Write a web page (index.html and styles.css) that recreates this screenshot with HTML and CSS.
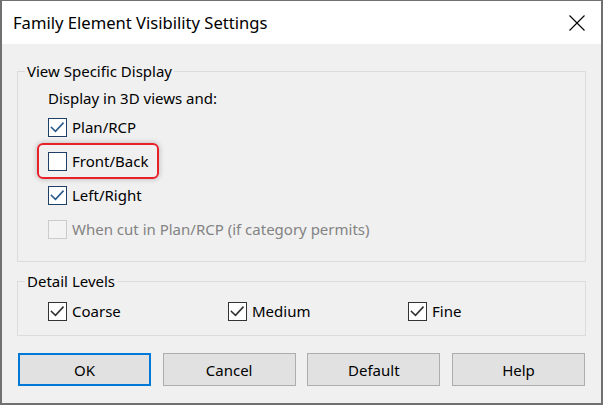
FILE: index.html
```html
<!DOCTYPE html>
<html>
<head>
<meta charset="utf-8">
<title>Family Element Visibility Settings</title>
<link rel="stylesheet" href="styles.css">
</head>
<body>
<div class="dialog">
  <div class="titlebar">
    <span class="title">Family Element Visibility Settings</span>
    <svg class="close" width="16" height="16" viewBox="0 0 16 16"><path d="M0.5 0.5 L15.5 15.5 M15.5 0.5 L0.5 15.5" stroke="#000" stroke-width="1.1" fill="none"/></svg>
  </div>
  <div class="content">
    <fieldset class="group group-view">
      <legend>View Specific Display</legend>
      <div class="caption">Display in 3D views and:</div>
      <div class="row"><label class="check"><span class="box box-blue"><svg viewBox="0 0 19 19"><path d="M3.5 9.5 L7.5 13.3 L15 5.2" /></svg></span>Plan/RCP</label></div>
      <div class="row"><label class="check highlight"><span class="box box-blue"></span>Front/Back</label></div>
      <div class="row"><label class="check"><span class="box box-blue"><svg viewBox="0 0 19 19"><path d="M3.5 9.5 L7.5 13.3 L15 5.2" /></svg></span>Left/Right</label></div>
      <div class="row"><label class="check disabled"><span class="box box-disabled"></span>When cut in Plan/RCP (if category permits)</label></div>
    </fieldset>
    <fieldset class="group group-detail">
      <legend>Detail Levels</legend>
      <div class="detail-row">
        <label class="check"><span class="box box-dark"><svg viewBox="0 0 19 19"><path d="M3.5 9.5 L7.5 13.3 L15 5.2" /></svg></span>Coarse</label>
        <label class="check"><span class="box box-dark"><svg viewBox="0 0 19 19"><path d="M3.5 9.5 L7.5 13.3 L15 5.2" /></svg></span>Medium</label>
        <label class="check"><span class="box box-dark"><svg viewBox="0 0 19 19"><path d="M3.5 9.5 L7.5 13.3 L15 5.2" /></svg></span>Fine</label>
      </div>
    </fieldset>
    <div class="buttons">
      <button class="btn btn-default">OK</button>
      <button class="btn">Cancel</button>
      <button class="btn">Default</button>
      <button class="btn">Help</button>
    </div>
  </div>
</div>
</body>
</html>
```

FILE: styles.css
```css
* { box-sizing: border-box; }
html, body { margin: 0; padding: 0; }
body {
  font-family: "Noto Sans", "Open Sans", sans-serif;
  font-size: 14px;
  color: #000;
  background: #f0f0f0;
}
.dialog {
  width: 603px;
  height: 405px;
  border: 2px solid #707070;
  border-top-width: 1px;
  background: #f0f0f0;
  display: flex;
  flex-direction: column;
}
.titlebar {
  height: 43px;
  background: #fff;
  display: flex;
  align-items: center;
  justify-content: space-between;
  padding: 0 16px 0 11px;
}
.title {
  font-size: 16.6px;
  line-height: 22px;
  margin-top: 1px;
}
.close { display: block; margin-top: 0; }
.content {
  padding: 17px 15px 0 15px;
  display: flex;
  flex-direction: column;
}
.group {
  margin: 0;
  border: 1px solid #dcdcdc;
  padding: 7px 10px 15px 30px;
  min-width: 0;
}
.group legend {
  padding: 0 2px;
  margin-left: -23px;
  line-height: 20px;
  font-size: 15px;
}
.caption {
  line-height: 20px;
  font-size: 15px;
  margin-bottom: 2px;
}
.row {
  height: 34px;
  display: flex;
  align-items: center;
}
.check {
  display: inline-flex;
  align-items: center;
  gap: 5px;
  font-size: 15px;
  line-height: 20px;
}
.box {
  width: 19px;
  height: 19px;
  border: 1px solid #333;
  background: #fff;
  display: inline-block;
  position: relative;
}
.box svg {
  position: absolute;
  left: -1px;
  top: -1px;
  width: 19px;
  height: 19px;
}
.box svg path {
  fill: none;
  stroke-width: 1.6;
  stroke-linecap: square;
}
.box-blue { border-color: #1f3f66; }
.box-blue svg path { stroke: #2b5a8c; }
.box-dark { border-color: #333; }
.box-dark svg path { stroke: #333; }
.box-disabled { border-color: #cccccc; background: #f3f3f3; }
.disabled { color: #838383; }
.highlight {
  border: 2px solid #e8202a;
  border-radius: 6px;
  padding: 6px 9px 6px 9px;
  margin: -1px 0 -1px -11px;
  box-shadow: 0 0 5px 1px rgba(0,0,0,0.18);
}
.group-detail {
  margin-top: 9px;
  padding-top: 3px;
  padding-bottom: 7px;
}
.detail-row {
  height: 34px;
  display: grid;
  grid-template-columns: 180px 180px 180px;
  align-items: center;
}
.buttons {
  margin: 17px 1px 0 1px;
  display: flex;
  justify-content: space-between;
}
.btn {
  width: 133px;
  height: 33px;
  font-family: inherit;
  font-size: 15px;
  background: #e1e1e1;
  border: 1px solid #adadad;
  color: #000;
  padding: 0;
  border-radius: 0;
}
.btn-default {
  border: 2px solid #0078d7;
}
```
